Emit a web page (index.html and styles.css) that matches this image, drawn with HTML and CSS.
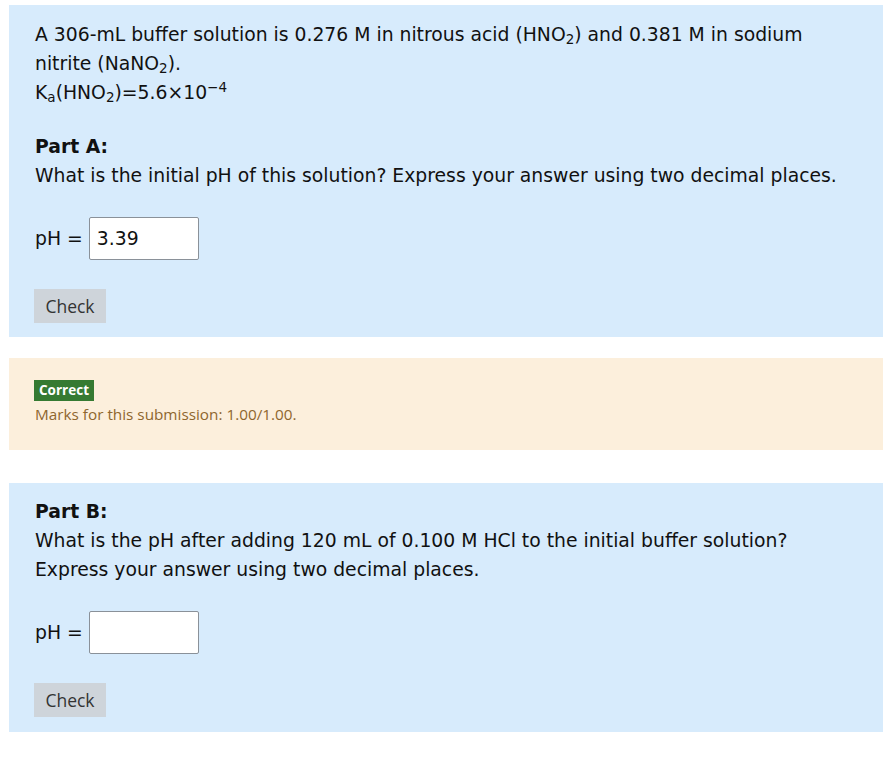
FILE: index.html
```html
<!DOCTYPE html>
<html>
<head>
<meta charset="utf-8">
<link rel="stylesheet" href="styles.css">
</head>
<body>
<div class="page">
  <section class="que">
    <div class="intro">
      <div class="line">A 306-mL buffer solution is 0.276 M in nitrous acid (HNO<sub>2</sub>) and 0.381 M in sodium nitrite (NaNO<sub>2</sub>).</div>
      <div class="line">K<sub>a</sub>(HNO<sub>2</sub>)=5.6×10<sup>−4</sup></div>
    </div>
    <div class="part-title">Part A:</div>
    <div class="question">What is the initial pH of this solution? Express your answer using two decimal places.</div>
    <div class="answer-row">
      <span class="label">pH =</span>
      <input class="answer" type="text" value="3.39">
    </div>
    <button class="check">Check</button>
  </section>

  <section class="outcome">
    <span class="badge">Correct</span>
    <div class="marks">Marks for this submission: 1.00/1.00.</div>
  </section>

  <section class="que que-b">
    <div class="part-title">Part B:</div>
    <div class="question">What is the pH after adding 120 mL of 0.100 M HCl to the initial buffer solution? Express your answer using two decimal places.</div>
    <div class="answer-row">
      <span class="label">pH =</span>
      <input class="answer" type="text" value="">
    </div>
    <button class="check">Check</button>
  </section>
</div>
</body>
</html>
```
FILE: styles.css
```css
html, body {
  margin: 0;
  padding: 0;
  background: #ffffff;
}
.page {
  padding: 5px 2px 0 9px;
  display: flex;
  flex-direction: column;
}
.que {
  background: #d7ebfc;
  padding: 15px 26px 14px 26px;
  font-family: "DejaVu Sans", Verdana, sans-serif;
  font-size: 18.8px;
  line-height: 29px;
  color: #111111;
}
.que-b {
  margin-top: 33px;
  padding-top: 14px;
  padding-bottom: 15px;
}
sub, sup {
  font-size: 0.72em;
  line-height: 0;
}
sub { vertical-align: -0.25em; }
sup { vertical-align: 0.5em; }
.part-title {
  font-weight: bold;
  margin-top: 25px;
}
.que-b .part-title {
  margin-top: 0;
}
.answer-row {
  display: flex;
  align-items: center;
  gap: 6px;
  margin-top: 27px;
}
.answer {
  box-sizing: border-box;
  width: 110px;
  height: 43px;
  border: 1px solid #8a9199;
  border-radius: 2px;
  padding: 0 7px;
  font-family: "DejaVu Sans", Verdana, sans-serif;
  font-size: 18.8px;
  color: #111111;
  background: #ffffff;
}
.check {
  display: block;
  margin-top: 29px;
  margin-left: -1px;
  background: #ced4da;
  border: none;
  border-radius: 0;
  width: 72px;
  height: 34px;
  padding: 0;
  font-family: "Open Sans", "Noto Sans", sans-serif;
  font-size: 17.5px;
  color: #333333;
}
.outcome {
  margin-top: 21px;
  background: #fcefdc;
  padding: 20px 26px 25px 25px;
  font-family: "Open Sans", "Noto Sans", sans-serif;
}
.badge {
  display: inline-block;
  background: #357a32;
  color: #ffffff;
  font-weight: bold;
  font-size: 13.5px;
  line-height: 21px;
  padding: 0 5px;
}
.marks {
  margin-top: 2px;
  margin-left: 1px;
  color: #8e662e;
  font-size: 15.3px;
  line-height: 22px;
}
```
